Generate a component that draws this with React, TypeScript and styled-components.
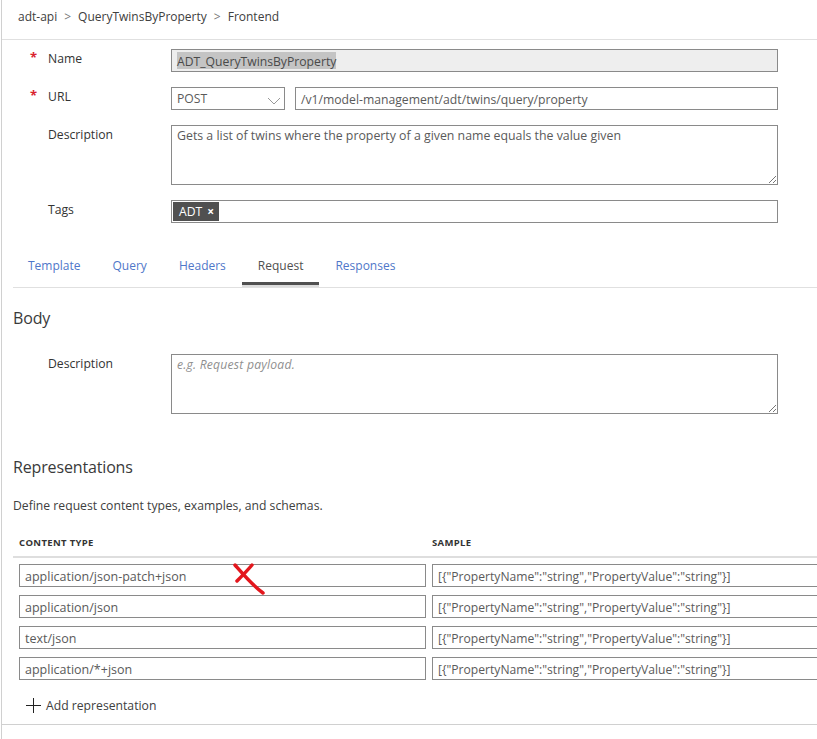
import React from 'react'
import styled, { createGlobalStyle } from 'styled-components'

const GlobalStyle = createGlobalStyle`
  html, body {
    margin: 0;
    padding: 0;
    background: #fff;
    font-family: "Open Sans", "Noto Sans", sans-serif;
    font-size: 12.2px;
    color: #333;
  }
`

const Page = styled.div`
  width: 816px;
  height: 739px;
  margin-left: 1px;
  overflow: hidden;
  box-sizing: border-box;
  border-left: 1px solid #d0d0d0;
`

const Breadcrumb = styled.div`
  display: flex;
  align-items: center;
  height: 40px;
  padding: 0 0 7px 16px;
  box-sizing: border-box;
  border-bottom: 1px solid #e0e0e0;
  margin-bottom: 9px;
  font-size: 12px;
  color: #404040;
`

const Crumb = styled.span`
  white-space: nowrap;
`

const Separator = styled.span`
  margin: 0 7px;
  color: #777;
`

const FormRow = styled.div`
  display: flex;
  align-items: flex-start;
  margin-bottom: 15px;
  padding-right: 39px;
`

const Required = styled.span`
  width: 18px;
  padding-left: 28px;
  flex: none;
  color: #d9232e;
  font-weight: 700;
  font-size: 13px;
  line-height: 16px;
`

const Spacer = styled.span`
  width: 46px;
  flex: none;
`

const Label = styled.div`
  width: 123px;
  flex: none;
  line-height: 18px;
  margin-top: 1px;
  color: #333;
`

const Field = styled.div<{ $width?: number; $height?: number; $top?: number }>`
  position: relative;
  box-sizing: border-box;
  height: ${(p) => p.$height ?? 23}px;
  ${(p) => (p.$width ? `width: ${p.$width}px; flex: none;` : 'flex: 1;')}
  border: 1px solid #8a8a8a;
  background: #fff;
  padding: ${(p) => p.$top ?? 3}px 5px 0;
  line-height: 18px;
  color: #5a5a5a;
  white-space: nowrap;
  overflow: hidden;
`

const NameField = styled(Field)`
  background: #eeeeee;
  padding-top: 2px;
`

const Selected = styled.div`
  width: fit-content;
  height: 17px;
  line-height: 20px;
  background: #c4c4c4;
  color: #4a4a4a;
`

const DescriptionText = styled.span`
  font-size: 12.33px;
`

const ContentType = styled(Field)`
  font-size: 12.5px;
`

const Sample = styled(Field)`
  font-size: 12.12px;
`

const Placeholder = styled.span`
  font-style: italic;
  color: #8f8f8f;
  letter-spacing: 0.2px;
`

const Chevron = styled.svg`
  position: absolute;
  right: 3px;
  top: 9px;
`

const Grip = styled.svg`
  position: absolute;
  right: 0;
  bottom: 0;
`

const UrlGroup = styled.div`
  display: flex;
  flex: 1;
  gap: 10px;
`

const TagField = styled(Field)`
  padding: 1px 1px 0;
`

const Tag = styled.span`
  display: inline-flex;
  align-items: center;
  gap: 5px;
  height: 19px;
  padding: 0 5px 0 6px;
  background: #505050;
  color: #fff;
  line-height: 19px;
`

const TagClose = styled.span`
  font-weight: 700;
  font-size: 12px;
`

const Tabs = styled.div`
  display: flex;
  margin: 29px 0 0 11px;
  height: 35px;
  border-bottom: 1px solid #e0e0e0;
  font-size: 12px;
`

const Tab = styled.div<{ $active?: boolean }>`
  box-sizing: border-box;
  height: ${(p) => (p.$active ? 33 : 35)}px;
  padding: 0 16px;
  line-height: 28px;
  white-space: nowrap;
  color: ${(p) => (p.$active ? '#505050' : '#4f77c9')};
  ${(p) => (p.$active ? 'border-bottom: 3px solid #505050; box-shadow: 0 2px 0 #dcdcdc;' : '')}

  &:first-child {
    padding-left: 15px;
  }
`

const SectionTitle = styled.h2`
  margin: 0;
  font-size: 16px;
  font-weight: 400;
  line-height: 22px;
  color: #3a3a3a;
  padding-left: 11px;
  letter-spacing: -0.15px;
`

const BodyTitle = styled(SectionTitle)`
  margin: 19px 0 25px;
`

const RepresentationsTitle = styled(SectionTitle)`
  margin: 42px 0 19px;
`

const Hint = styled.p`
  margin: 0 0 19px;
  padding-left: 11px;
  line-height: 18px;
  color: #404040;
`

const TableHead = styled.div`
  display: grid;
  grid-template-columns: 413px 1fr;
  margin-left: 11px;
  height: 20px;
  padding: 2px 0 0 6px;
  border-bottom: 2px solid #dedede;
  font-size: 9.5px;
  font-weight: 700;
  letter-spacing: 0.35px;
  line-height: 14px;
  color: #333;
`

const TableBody = styled.div`
  position: relative;
  display: grid;
  grid-template-columns: 407px 400px;
  column-gap: 6px;
  row-gap: 8px;
  padding: 6px 0 0 17px;
`

const Scribble = styled.svg`
  position: absolute;
  left: 230px;
  top: 5px;
`

const AddRow = styled.div`
  display: flex;
  align-items: center;
  gap: 5px;
  height: 45px;
  padding: 7px 0 0 24px;
  box-sizing: border-box;
  border-bottom: 1px solid #d0d0d0;
  color: #404040;
`

const rows = ['application/json-patch+json', 'application/json', 'text/json', 'application/*+json']
const sample = '[{"PropertyName":"string","PropertyValue":"string"}]'

const ResizeGrip = () => (
  <Grip width="10" height="10" viewBox="0 0 10 10">
    <path d="M2 9 L9 2 M6 9 L9 6" stroke="#777" strokeWidth="1" fill="none" />
  </Grip>
)

export default function App() {
  return (
    <Page>
      <GlobalStyle />
      <Breadcrumb>
        <Crumb>adt-api</Crumb>
        <Separator>&gt;</Separator>
        <Crumb>QueryTwinsByProperty</Crumb>
        <Separator>&gt;</Separator>
        <Crumb>Frontend</Crumb>
      </Breadcrumb>

      <FormRow>
        <Required>*</Required>
        <Label>Name</Label>
        <NameField>
          <Selected>ADT_QueryTwinsByProperty</Selected>
        </NameField>
      </FormRow>

      <FormRow>
        <Required>*</Required>
        <Label>URL</Label>
        <UrlGroup>
          <Field $width={114} $top={2}>
            POST
            <Chevron width="14" height="9" viewBox="0 0 14 9">
              <path d="M1 1 L7 7 L13 1" stroke="#999" strokeWidth="1" fill="none" />
            </Chevron>
          </Field>
          <Field>/v1/model-management/adt/twins/query/property</Field>
        </UrlGroup>
      </FormRow>

      <FormRow>
        <Spacer />
        <Label>Description</Label>
        <Field $height={60} $top={1}>
          <DescriptionText>
            Gets a list of twins where the property of a given name equals the value given
          </DescriptionText>
          <ResizeGrip />
        </Field>
      </FormRow>

      <FormRow>
        <Spacer />
        <Label>Tags</Label>
        <TagField>
          <Tag>
            ADT <TagClose>×</TagClose>
          </Tag>
        </TagField>
      </FormRow>

      <Tabs>
        <Tab>Template</Tab>
        <Tab>Query</Tab>
        <Tab>Headers</Tab>
        <Tab $active>Request</Tab>
        <Tab>Responses</Tab>
      </Tabs>

      <BodyTitle>Body</BodyTitle>

      <FormRow>
        <Spacer />
        <Label>Description</Label>
        <Field $height={60} $top={1}>
          <Placeholder>e.g. Request payload.</Placeholder>
          <ResizeGrip />
        </Field>
      </FormRow>

      <RepresentationsTitle>Representations</RepresentationsTitle>
      <Hint>Define request content types, examples, and schemas.</Hint>

      <TableHead>
        <span>CONTENT TYPE</span>
        <span>SAMPLE</span>
      </TableHead>

      <TableBody>
        {rows.map((type) => (
          <React.Fragment key={type}>
            <ContentType>{type}</ContentType>
            <Sample>{sample}</Sample>
          </React.Fragment>
        ))}
        <Scribble width="34" height="34" viewBox="0 0 34 34">
          <path
            d="M3 2 C10 10 20 22 31 30 M20 2 C15 8 10 13 5 18"
            stroke="#e3171d"
            strokeWidth="3.5"
            strokeLinecap="round"
            fill="none"
          />
        </Scribble>
      </TableBody>

      <AddRow>
        <svg width="15" height="15" viewBox="0 0 15 15">
          <path d="M7.5 0 V15 M0 7.5 H15" stroke="#222" strokeWidth="1" />
        </svg>
        Add representation
      </AddRow>
    </Page>
  )
}
